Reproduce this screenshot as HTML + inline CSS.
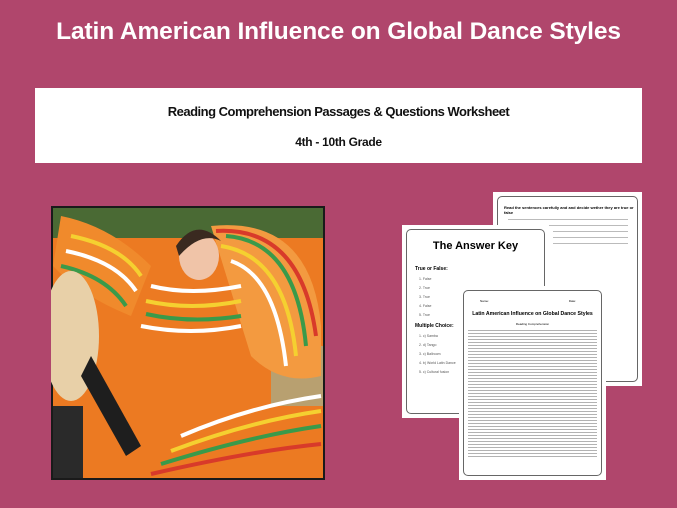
<!DOCTYPE html>
<html><head><meta charset="utf-8"><style>
body{margin:0;width:677px;height:508px;background:#b0466c;position:relative;overflow:hidden;font-family:"Liberation Sans",sans-serif}
.t{position:absolute;left:0;width:677px;top:18px;text-align:center;color:#fff;font-weight:bold;font-size:24.5px;letter-spacing:-0.1px}
.box{position:absolute;left:35px;top:88px;width:607px;height:75px;background:#fff;text-align:center;color:#111;font-weight:bold}
.box .a{position:absolute;top:16px;width:100%;font-size:13px;letter-spacing:-0.5px}
.box .b{position:absolute;top:47px;width:100%;font-size:12px;letter-spacing:-0.3px}
.pg{position:absolute;background:#fff;box-sizing:border-box}
.in{position:absolute;border:1px solid #666;border-radius:5px;left:4px;top:4px;right:4px;bottom:4px}
.ln{position:absolute;height:1px;background:#bbb}
.li{font-size:3.5px;color:#555;margin:5px 0 0 12px}
</style></head><body>
<div class="t">Latin American Influence on Global Dance Styles</div>
<div class="box"><div class="a">Reading Comprehension Passages &amp; Questions Worksheet</div><div class="b">4th - 10th Grade</div></div>

<svg style="position:absolute;left:51px;top:206px" width="274" height="274" viewBox="0 0 274 274">
<rect width="274" height="274" fill="#1a1a1a"/>
<rect x="2" y="2" width="270" height="270" fill="#ec7a22"/>
<rect x="2" y="2" width="270" height="30" fill="#4a6a34"/>
<rect x="220" y="140" width="52" height="60" fill="#b8a070"/>
<path d="M160 20 Q260 10 270 120 L270 170 Q230 180 200 150 Z" fill="#f39a40"/>
<path d="M10 10 Q60 20 100 60 L80 110 Q30 90 2 60Z" fill="#f08a2c"/>
<g fill="none" stroke-width="4">
<path d="M165 25 Q250 20 265 130" stroke="#d83a2a"/>
<path d="M175 30 Q245 35 255 140" stroke="#3a9a4a"/>
<path d="M170 40 Q235 50 245 150" stroke="#f5d030"/>
<path d="M180 55 Q225 70 235 160" stroke="#fff"/>
<path d="M100 80 Q140 90 190 80" stroke="#fff"/>
<path d="M95 95 Q140 105 190 95" stroke="#f5d030"/>
<path d="M95 108 Q140 118 190 110" stroke="#3a9a4a"/>
<path d="M90 120 Q140 130 190 120" stroke="#fff"/>
<path d="M130 230 Q200 200 270 190" stroke="#fff"/>
<path d="M120 245 Q200 215 270 205" stroke="#f5d030"/>
<path d="M110 258 Q200 230 270 220" stroke="#3a9a4a"/>
<path d="M100 268 Q200 245 270 238" stroke="#d83a2a"/>
<path d="M20 30 Q70 40 90 70" stroke="#f5d030"/>
<path d="M15 45 Q65 55 85 85" stroke="#fff"/>
<path d="M10 60 Q55 70 75 100" stroke="#3a9a4a"/>
</g>
<ellipse cx="148" cy="50" rx="20" ry="24" fill="#f0c4a8"/>
<path d="M125 40 Q145 10 170 35 Q150 25 128 50Z" fill="#3a2a20"/>
<ellipse cx="20" cy="130" rx="28" ry="65" fill="#e8d0a8"/>
<path d="M40 150 L90 240 L75 250 L30 170Z" fill="#1e1e1e"/>
<rect x="2" y="200" width="30" height="72" fill="#2a2a2a"/>
</svg>

<div class="pg" style="left:493px;top:192px;width:149px;height:194px"><div class="in">
<div style="font-size:4px;font-weight:bold;margin:8px 0 0 6px">Read the sentences carefully and and decide wether they are true or false</div>
<div class="ln" style="left:10px;top:22px;width:120px"></div><div class="ln" style="left:10px;top:28px;width:120px"></div><div class="ln" style="left:55px;top:34px;width:75px"></div><div class="ln" style="left:55px;top:40px;width:75px"></div><div class="ln" style="left:55px;top:46px;width:75px"></div>
</div></div>

<div class="pg" style="left:402px;top:225px;width:147px;height:193px"><div class="in">
<div style="text-align:center;font-weight:bold;font-size:11px;margin-top:10px">The Answer Key</div>
<div style="font-size:5px;font-weight:bold;margin:14px 0 0 8px">True or False:</div>
<div class="li">1. False</div><div class="li">2. True</div><div class="li">3. True</div><div class="li">4. False</div><div class="li">5. True</div>
<div style="font-size:5px;font-weight:bold;margin:6px 0 0 8px">Multiple Choice:</div>
<div class="li">1. c) Samba</div><div class="li">2. d) Tango</div><div class="li">3. c) Ballroom</div><div class="li">4. b) World Latin Dance</div><div class="li">5. c) Cultural fusion</div>
</div></div>

<div class="pg" style="left:459px;top:286px;width:147px;height:194px"><div class="in">
<div style="font-size:3px;margin:8px 0 0 16px">Name:<span style="margin-left:80px">Date:</span></div>
<div style="text-align:center;font-weight:bold;font-size:5.2px;margin-top:8px;white-space:nowrap">Latin American Influence on Global Dance Styles</div>
<div style="text-align:center;font-size:3px;margin-top:5px">Reading Comprehension</div>
<div style="margin:3px 4px 0 4px;height:130px;background:repeating-linear-gradient(#fff 0 1px,#aaa 1px 2px,#fff 2px 3px);opacity:.9"></div>
</div></div>
</body></html>
